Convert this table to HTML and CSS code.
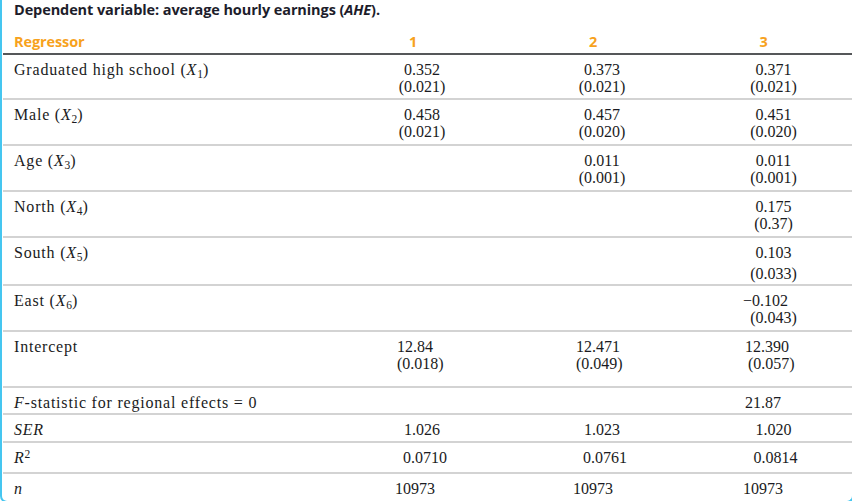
FILE: index.html
```html
<!DOCTYPE html>
<html lang="en">
<head>
<meta charset="utf-8">
<title>Regression results</title>
<link rel="stylesheet" href="styles.css">
</head>
<body>
<div class="panel">
  <h1 class="title">Dependent variable: average hourly earnings (<i>AHE</i>).</h1>
  <table class="reg">
    <colgroup>
      <col class="c-lab"><col class="c-1"><col class="c-2"><col class="c-3">
    </colgroup>
    <thead>
      <tr>
        <th class="lab">Regressor</th><th class="h1">1</th><th class="h2">2</th><th class="h3">3</th>
      </tr>
    </thead>
    <tbody>
      <tr class="r-first">
        <td class="lab">Graduated high school (<i>X</i><sub>1</sub>)</td>
        <td class="v1">0.352<br>(0.021)</td>
        <td class="v2">0.373<br>(0.021)</td>
        <td class="v3">0.371<br>(0.021)</td>
      </tr>
      <tr>
        <td class="lab">Male (<i>X</i><sub>2</sub>)</td>
        <td class="v1">0.458<br>(0.021)</td>
        <td class="v2">0.457<br>(0.020)</td>
        <td class="v3">0.451<br>(0.020)</td>
      </tr>
      <tr>
        <td class="lab">Age (<i>X</i><sub>3</sub>)</td>
        <td class="v1"></td>
        <td class="v2">0.011<br>(0.001)</td>
        <td class="v3">0.011<br>(0.001)</td>
      </tr>
      <tr>
        <td class="lab">North (<i>X</i><sub>4</sub>)</td>
        <td class="v1"></td>
        <td class="v2"></td>
        <td class="v3">0.175<br>(0.37)</td>
      </tr>
      <tr class="r-gap">
        <td class="lab">South (<i>X</i><sub>5</sub>)</td>
        <td class="v1"></td>
        <td class="v2"></td>
        <td class="v3">0.103<span class="se">(0.033)</span></td>
      </tr>
      <tr>
        <td class="lab">East (<i>X</i><sub>6</sub>)</td>
        <td class="v1"></td>
        <td class="v2"></td>
        <td class="v3"><span class="neg">&minus;0.102</span><br>(0.043)</td>
      </tr>
      <tr class="r-tall">
        <td class="lab">Intercept</td>
        <td class="v1 left">12.84<br>(0.018)</td>
        <td class="v2 left">12.471<br>(0.049)</td>
        <td class="v3 left">12.390<br><span class="nudge">(0.057)</span></td>
      </tr>
      <tr class="r-f">
        <td class="lab"><i>F</i>-statistic for regional effects = 0</td>
        <td class="v1"></td>
        <td class="v2"></td>
        <td class="v3 left">21.87</td>
      </tr>
      <tr class="r-ser">
        <td class="lab"><i>SER</i></td>
        <td class="v1">1.026</td>
        <td class="v2">1.023</td>
        <td class="v3">1.020</td>
      </tr>
      <tr class="r-r2">
        <td class="lab"><i>R</i><sup>2</sup></td>
        <td class="v1 r2v">0.0710</td>
        <td class="v2 r2v">0.0761</td>
        <td class="v3 r2v">0.0814</td>
      </tr>
      <tr class="r-n">
        <td class="lab"><i>n</i></td>
        <td class="v1 left nleft">10973</td>
        <td class="v2 left nleft">10973</td>
        <td class="v3 left nleft">10973</td>
      </tr>
    </tbody>
  </table>
</div>
</body>
</html>
```

FILE: styles.css
```css
html, body {
  margin: 0;
  padding: 0;
  background: #ffffff;
  overflow: hidden;
}

.panel {
  width: 850px;
  border-left: 2px solid #45c6f0;
  border-right: 2px solid #45c6f0;
  border-bottom: 2px solid #45c6f0;
  border-bottom-left-radius: 7px;
  border-bottom-right-radius: 7px;
  padding-top: 0;
}

.title {
  margin: 0 0 0 12px;
  font-family: "Open Sans", "Noto Sans", sans-serif;
  font-weight: 700;
  font-size: 14.5px;
  line-height: 19px;
  color: #1d1d2b;
  letter-spacing: -0.1px;
}

.reg {
  margin-left: 1px;
  width: 849px;
  border-collapse: separate;
  border-spacing: 0;
  table-layout: fixed;
  font-family: "Liberation Serif", "Times New Roman", serif;
  font-size: 16px;
  line-height: 17px;
  color: #1a1b22;
}

.c-lab { width: 327px; }
.c-1 { width: 184px; }
.c-2 { width: 176px; }
.c-3 { width: 162px; }

.reg th {
  font-family: "Open Sans", "Noto Sans", sans-serif;
  font-weight: 700;
  font-size: 14.5px;
  line-height: 16px;
  color: #f7a21d;
  padding: 15px 0 3px;
  border-bottom: 2px solid #555759;
  text-align: center;
  letter-spacing: -0.1px;
}

.reg th.lab {
  text-align: left;
  padding-left: 11px;
}

.reg th.h1 { padding-right: 18px; }
.reg th.h2 { padding-right: 18px; }
.reg th.h3 { padding-left: 5px; padding-right: 20px; }

.reg td {
  padding: 6px 0 4px;
  border-bottom: 2px solid #d3d3d3;
  vertical-align: top;
  text-align: center;
  white-space: nowrap;
}

.reg td.lab {
  text-align: left;
  padding-left: 11px;
  letter-spacing: 0.8px;
}

.reg td.v3 { padding-left: 5px; }

.reg td.left { text-align: left; }
.reg td.v1.left { padding-left: 67px; }
.reg td.v2.left { padding-left: 62px; }
.reg td.v3.left { padding-left: 55px; }
.reg td.v1.nleft { padding-left: 65px; }
.reg td.v2.nleft { padding-left: 59px; }
.reg td.v3.nleft { padding-left: 53px; }

.reg td.r2v { padding-left: 6px; }
.reg td.v3.r2v { padding-left: 9px; }

.nudge { padding-left: 3px; }
.neg { margin-left: -16px; }

.reg i { font-style: italic; }

.reg sub {
  font-size: 0.72em;
  line-height: 0;
  vertical-align: -0.28em;
  letter-spacing: 0;
}

.reg sup {
  font-size: 0.72em;
  line-height: 0;
  vertical-align: 0.45em;
  letter-spacing: 0;
}

.se {
  display: block;
  margin-top: 4px;
}

.r-first td { padding-bottom: 3px; }
.r-gap td { padding-bottom: 2px; }
.r-tall td { padding-bottom: 14px; }
.r-f td { padding-bottom: 2px; }
.r-ser td { padding-bottom: 3px; }
.r-r2 td { padding-bottom: 6px; }
.r-n td { padding-bottom: 4px; border-bottom: none; }
```
